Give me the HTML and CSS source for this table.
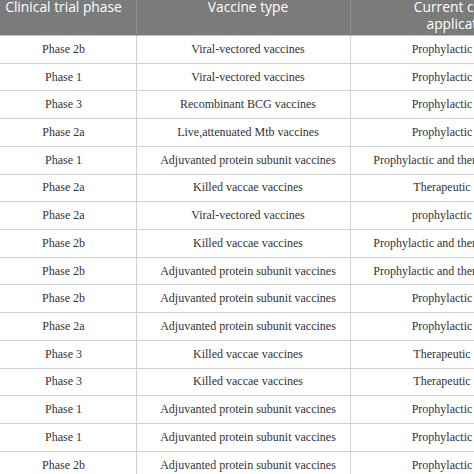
FILE: index.html
```html
<!DOCTYPE html>
<html>
<head>
<meta charset="utf-8">
<link rel="stylesheet" href="styles.css">
</head>
<body>
<div class="table">
  <div class="th c1">Clinical trial phase</div>
  <div class="th c2">Vaccine type</div>
  <div class="th c3">Current clinical<br>application</div>

  <div class="td c1">Phase 2b</div><div class="td c2">Viral-vectored vaccines</div><div class="td c3">Prophylactic</div>
  <div class="td c1">Phase 1</div><div class="td c2">Viral-vectored vaccines</div><div class="td c3">Prophylactic</div>
  <div class="td c1">Phase 3</div><div class="td c2">Recombinant BCG vaccines</div><div class="td c3">Prophylactic</div>
  <div class="td c1">Phase 2a</div><div class="td c2">Live,attenuated Mtb vaccines</div><div class="td c3">Prophylactic</div>
  <div class="td c1">Phase 1</div><div class="td c2">Adjuvanted protein subunit vaccines</div><div class="td c3">Prophylactic and therapeutic</div>
  <div class="td c1">Phase 2a</div><div class="td c2">Killed vaccae vaccines</div><div class="td c3">Therapeutic</div>
  <div class="td c1">Phase 2a</div><div class="td c2">Viral-vectored vaccines</div><div class="td c3">prophylactic</div>
  <div class="td c1">Phase 2b</div><div class="td c2">Killed vaccae vaccines</div><div class="td c3">Prophylactic and therapeutic</div>
  <div class="td c1">Phase 2b</div><div class="td c2">Adjuvanted protein subunit vaccines</div><div class="td c3">Prophylactic and therapeutic</div>
  <div class="td c1">Phase 2b</div><div class="td c2">Adjuvanted protein subunit vaccines</div><div class="td c3">Prophylactic</div>
  <div class="td c1">Phase 2a</div><div class="td c2">Adjuvanted protein subunit vaccines</div><div class="td c3">Prophylactic</div>
  <div class="td c1">Phase 3</div><div class="td c2">Killed vaccae vaccines</div><div class="td c3">Therapeutic</div>
  <div class="td c1">Phase 3</div><div class="td c2">Killed vaccae vaccines</div><div class="td c3">Therapeutic</div>
  <div class="td c1">Phase 1</div><div class="td c2">Adjuvanted protein subunit vaccines</div><div class="td c3">Prophylactic</div>
  <div class="td c1">Phase 1</div><div class="td c2">Adjuvanted protein subunit vaccines</div><div class="td c3">Prophylactic</div>
  <div class="td c1">Phase 2b</div><div class="td c2">Adjuvanted protein subunit vaccines</div><div class="td c3">Prophylactic</div>
</div>
</body>
</html>
```
FILE: styles.css
```css
html, body {
  margin: 0;
  padding: 0;
  background: #ffffff;
  overflow: hidden;
  width: 474px;
  height: 474px;
}

.table {
  display: grid;
  grid-template-columns: 146px 214px 182px;
  margin-left: -9px;
  margin-top: -2px;
  width: 542px;
}

.th {
  background: #7b7b7b;
  color: #ffffff;
  font-family: "Open Sans", "Noto Sans", sans-serif;
  font-size: 13.8px;
  line-height: 17px;
  height: 38px;
  box-sizing: border-box;
  text-align: center;
  white-space: nowrap;
  border-bottom: 1px solid #bdbdbd;
}

.th.c1, .th.c2 {
  border-right: 1px solid #8c8c8c;
}

.th.c2 {
  padding-left: 9px;
}

.th.c3 {
  padding-left: 40px;
}

.td {
  font-family: "Liberation Serif", "DejaVu Serif", serif;
  font-size: 12px;
  color: #333333;
  height: 27.73px;
  box-sizing: border-box;
  display: flex;
  align-items: center;
  justify-content: center;
  white-space: nowrap;
  border-bottom: 1px solid #d2d2d2;
}

.td.c1, .td.c2 {
  border-right: 1px solid #d2d2d2;
}

.td.c2 {
  padding-left: 9px;
}
```
